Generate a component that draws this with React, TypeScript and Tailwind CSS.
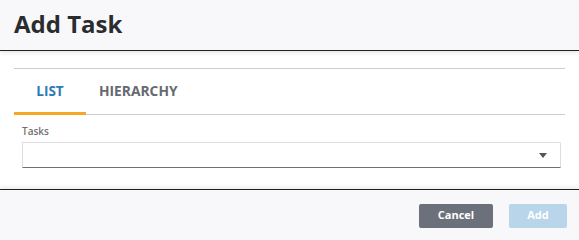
import React from "react";

export default function App() {
  return (
    <div
      className="w-[579px] h-[240px] flex flex-col bg-white overflow-hidden"
      style={{ fontFamily: '"Open Sans", "Noto Sans", sans-serif' }}
    >
      <div className="relative z-10 h-[51px] shrink-0 bg-[#f8f8fa] border-b border-[#1f2124] shadow-[0_2px_4px_rgba(0,0,0,0.10)] flex items-center px-[14px]">
        <span className="text-[24px] font-bold text-[#2a2c30] leading-none -mt-[2px]">
          Add Task
        </span>
      </div>
      <div className="flex-1 bg-white px-[14px] pt-[17px]">
        <div className="border-t border-[#cccccc] h-[47px] border-b flex items-stretch">
          <div className="relative w-[72px] flex items-center justify-center text-[13.5px] font-bold text-[#2b7bb9]">
            LIST
            <div className="absolute left-0 right-0 -bottom-[1px] h-[3px] bg-[#f7a823]" />
          </div>
          <div className="flex items-center pl-[13px] text-[13.8px] font-bold text-[#666a70]">
            HIERARCHY
          </div>
        </div>
        <div className="pl-[8px] pr-[4px] pt-[9px]">
          <div className="text-[10px] font-semibold text-[#707070] leading-[14px]">Tasks</div>
          <div className="mt-[4px] h-[26px] border border-[#dedede] border-b-[#707070] rounded-tr-[2px] flex items-center justify-end pr-[13px]">
            <svg width="8" height="5" viewBox="0 0 8 5">
              <path d="M0 0 H8 L4 5 Z" fill="#555" />
            </svg>
          </div>
        </div>
      </div>
      <div className="relative z-10 h-[51px] shrink-0 bg-[#f8f8fa] border-t border-[#1f2124] shadow-[0_-2px_4px_rgba(0,0,0,0.08)] flex items-center justify-end gap-[16px] pr-[12px] pt-[1px]">
        <button className="w-[74px] h-[24px] rounded-[2px] bg-[#6c707b] text-white text-[11px] font-bold">
          Cancel
        </button>
        <button className="w-[58px] h-[24px] rounded-[2px] bg-[#b9d5ea] text-white text-[11px] font-bold">
          Add
        </button>
      </div>
    </div>
  );
}
